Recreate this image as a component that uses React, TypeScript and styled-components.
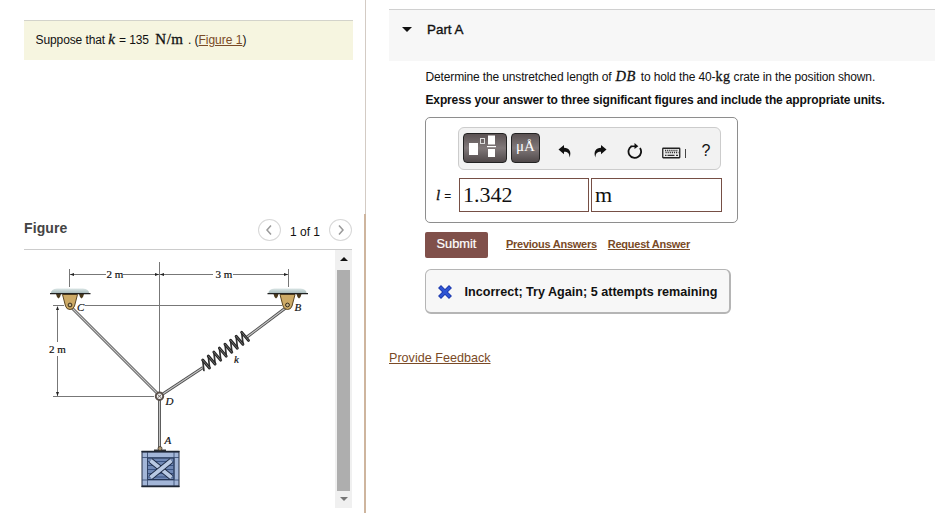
import React from "react";
import styled, { createGlobalStyle } from "styled-components";

const GlobalStyle = createGlobalStyle`
  * {
    box-sizing: border-box;
  }
  body {
    margin: 0;
    background: #fff;
    color: #111;
    font-family: "Liberation Sans", Arial, sans-serif;
    font-size: 12px;
    overflow: hidden;
  }
`;

const Bracket = ({ x }: { x: number }) => (
  <g transform={`translate(${x} 0)`}>
    <path d="M-19 293 Q-19 289 -13 288.5 H13 Q19 289 19 293 Z" fill="url(#ceiling)" />
    <path d="M-14 294 h5 l-1 3 l-1.500 1.500 l-1.500 -1.500 Z M9 294 h5 l-1 3 l-1.500 1.500 l-1.500 -1.500 Z" fill="#4b3a1c" />
    <path d="M-7.500 294.500 H7.500 L4.500 306 Q3.500 309.500 0 309.500 Q-3.500 309.500 -4.500 306 Z" fill="#cdaa66" stroke="#5b4520" strokeWidth="1" />
    <path d="M-20 293.700 H20.500" stroke="#222" strokeWidth="1.300" />
    <circle cx="0" cy="305" r="1.900" fill="#c4b48c" stroke="#332816" strokeWidth="1" />
  </g>
);

const Rope = ({ d }: { d: string }) => (
  <>
    <path d={d} stroke="#4a4a4a" strokeWidth="2.900" fill="none" />
    <path d={d} stroke="#c4c4c4" strokeWidth="1.200" fill="none" />
  </>
);

// front strands of the spring are heavy, the strands behind them are thin
const coilStarts = Array.from({ length: 8 }, (_, i) => [202.7 + i * 5.57, 360 - i * 3.95]);
const frontCoils = coilStarts.map(([x, y]) => `M${x} ${y} l6.8 8`).join(" ");
const backCoils = coilStarts.map(([x, y]) => `M${x} ${y} l1.2 10.5`).join(" ");

const Diagram = () => (
  <DiagramSvg viewBox="24 250 311 258">
    <defs>
      <linearGradient id="ceiling" x1="0" y1="0" x2="0" y2="1">
        <stop offset="0" stopColor="#dbe6e6" />
        <stop offset="1" stopColor="#a9bcbc" />
      </linearGradient>
    </defs>
    <g stroke="#777" strokeWidth="1" fill="none">
      <path d="M69.500 269 V287 M288.500 269 V287 M159.500 262 V393" />
      <path d="M70 274.500 H106 M123 274.500 H213 M233 274.500 H288" />
      <path d="M53 305.500 H64 M85 305.500 H282 M53 396.500 H154" />
      <path d="M57.500 307 V342 M57.500 356 V396" />
    </g>
    <path
      d="M70 274.500 l4 -1.500 v3 Z M159 274.500 l-4 -1.500 v3 Z M160 274.500 l4 -1.500 v3 Z M288 274.500 l-4 -1.500 v3 Z M57.500 306 l-1.500 4 h3 Z M57.500 396 l-1.500 -4 h3 Z"
      fill="#222"
    />
    <Rope d="M71 307 L158 394" />
    <Rope d="M162 394.500 L203 367.500" />
    <Rope d="M247 337 L285.500 308" />
    <Rope d="M159.500 399 V449" />
    <Bracket x={70} />
    <Bracket x={287.5} />
    <path d={backCoils} stroke="#333" strokeWidth="1.700" strokeLinecap="round" />
    <path d={frontCoils} stroke="#242424" strokeWidth="2.900" strokeLinecap="round" />
    <path d={frontCoils} stroke="#8c8c8c" strokeWidth="0.700" strokeLinecap="round" />
    <circle cx="159.500" cy="396.300" r="3.700" fill="#eee" stroke="#5a504a" strokeWidth="2" />
    <path d="M157.500 394.500 l4 3.500 M161.500 394.500 l-4 3.500" stroke="#5a504a" strokeWidth="0.800" />
    <path d="M154 449.500 h12 v2 h-12 Z" fill="#333" />
    <circle cx="160" cy="448.500" r="2" fill="#b29b78" stroke="#40382c" strokeWidth="0.800" />
    <rect x="141.500" y="451" width="38" height="36" fill="#222d42" />
    <rect x="142.500" y="452.500" width="36" height="33" fill="#a3b6d8" />
    <rect x="147.500" y="458" width="26.500" height="21.500" fill="#7088b5" stroke="#1d2a44" strokeWidth="1" />
    <path d="M148 461.500 h26 M148 465.500 h26 M148 469.500 h26 M148 473.500 h26 M148 477 h26" stroke="#344d7c" strokeWidth="0.900" />
    <path d="M150.500 460.500 L171.500 477.500" stroke="#1d2a44" strokeWidth="5.600" />
    <path d="M150.500 460.500 L171.500 477.500" stroke="#b9c9e3" strokeWidth="3.800" />
    <path d="M150.500 477.500 L171.500 460.500" stroke="#1d2a44" strokeWidth="5.600" />
    <path d="M150.500 477.500 L171.500 460.500" stroke="#b9c9e3" strokeWidth="3.800" />
    <path d="M142 457.500 h37 M142 480 h37 M147.500 452 v34 M174 452 v34" stroke="#33476c" strokeWidth="0.800" />
    <path d="M141.500 451.500 h38 M141.500 486.500 h38" stroke="#1e2633" strokeWidth="1.500" />
    <Label x="106.500" y="277.500">2 m</Label>
    <Label x="215.500" y="277.500">3 m</Label>
    <Label x="49" y="353">2 m</Label>
    <Label x="77" y="310.500" $italic>C</Label>
    <Label x="294.500" y="310.500" $italic>B</Label>
    <Label x="234" y="363" $italic>k</Label>
    <Label x="165.500" y="405" $italic>D</Label>
    <Label x="164.500" y="444" $italic>A</Label>
  </DiagramSvg>
);

const App = () => {
  return (
    <Page>
      <GlobalStyle />
      <Left>
        <Prompt>
          Suppose that <Math $size={15} $width={7.5} $italic>k</Math> = 135 &nbsp;
          <Math $size={15} $width={29.5}>N/m</Math> . (<Link href="#">Figure 1</Link>)
        </Prompt>
        <FigureHeader>
          <h2>Figure</h2>
          <Pager>
            <RoundButton aria-label="Previous">
              <svg width="8" height="12" viewBox="0 0 8 12"><path d="M6 1.500 L2 6 L6 10.500" /></svg>
            </RoundButton>
            <span>1 of 1</span>
            <RoundButton aria-label="Next">
              <svg width="8" height="12" viewBox="0 0 8 12"><path d="M2 1.500 L6 6 L2 10.500" /></svg>
            </RoundButton>
          </Pager>
        </FigureHeader>
        <FigureBody>
          <Diagram />
          <Scrollbar>
            <Arrow $color="#111" $up />
            <Thumb />
            <Arrow $color="#777" />
          </Scrollbar>
        </FigureBody>
      </Left>
      <Divider />
      <Right>
        <PartHeader>
          <Arrow $color="#111" $size={5} />
          <span>Part A</span>
        </PartHeader>
        <Question>
          <Line>
            Determine the unstretched length of <Math $size={14.5} $width={22} $gap={1}>
              <i>DB</i>
            </Math> to hold the 40-
            <Math $size={14} $width={15}>kg</Math> crate in the position shown.
          </Line>
          <Line $bold>Express your answer to three significant figures and include the appropriate units.</Line>
          <AnswerBox>
            <Toolbar>
              <DarkButton $width={44} aria-label="Templates">
                <svg width="36" height="26" viewBox="0 0 36 26">
                  <rect x="2" y="8" width="9" height="12" fill="#fff" />
                  <rect x="13.500" y="3.500" width="4" height="5" fill="none" stroke="#ddd" />
                  <rect x="21" y="0.500" width="7" height="9" fill="#fff" />
                  <rect x="20" y="11" width="9" height="1.200" fill="#fff" />
                  <rect x="21" y="14" width="7" height="8" fill="#fff" />
                </svg>
              </DarkButton>
              <DarkButton $width={29} $raise={3}>μÅ</DarkButton>
              <Tools>
                <svg width="14" height="14" viewBox="0 0 14 14">
                  <path d="M0.500 5.500 L6 1 V3.700 C11 3.700 14 7.500 11.500 13.500 C11.500 9 9.500 7.600 6 7.700 V10.300 Z" fill="#111" />
                </svg>
                <svg width="14" height="14" viewBox="0 0 14 14">
                  <path d="M13.500 5.500 L8 1 V3.700 C3 3.700 0 7.500 2.500 13.500 C2.500 9 4.500 7.600 8 7.700 V10.300 Z" fill="#111" />
                </svg>
                <svg width="16" height="16" viewBox="0 0 16 16">
                  <path d="M4.500 3.200 A6.300 6.300 0 1 0 13 5" fill="none" stroke="#111" strokeWidth="1.800" />
                  <path d="M3.700 3.300 H9" stroke="#111" strokeWidth="1.600" />
                  <path d="M7.500 0 L11.300 3.300 L7.500 6 Z" fill="#111" />
                </svg>
                <Keyboard width="25" height="12" viewBox="0 0 25 12">
                  <rect x="0.750" y="1.250" width="17" height="9.500" rx="0.500" fill="#eee" stroke="#222" strokeWidth="1.300" />
                  <path d="M3 3.500 h13 M3.500 5.500 h13" stroke="#333" strokeWidth="1.300" strokeDasharray="1.200 0.900" />
                  <path d="M3 8.300 h1.500 M5.500 8.300 h7 M14 8.300 h2" stroke="#333" strokeWidth="1.200" />
                  <path d="M23.500 2 v9" stroke="#444" />
                </Keyboard>
                <span>?</span>
              </Tools>
            </Toolbar>
            <Inputs>
              <span><Math $size={15} $width={5} $italic>l</Math> =</span>
              <Field $width={130}>1.342</Field>
              <Field $width={131}>m</Field>
            </Inputs>
          </AnswerBox>
          <Actions>
            <Submit>Submit</Submit>
            <Link href="#" $small>Previous Answers</Link>
            <Link href="#" $small>Request Answer</Link>
          </Actions>
          <Feedback>
            <svg width="14" height="14" viewBox="0 0 14 14">
              <path d="M3 3 L11 11 M11 3 L3 11" stroke="#1a35a8" strokeWidth="4.200" strokeLinecap="square" />
              <path d="M3 3 L11 11 M11 3 L3 11" stroke="#2f55d4" strokeWidth="2.600" strokeLinecap="square" />
            </svg>
            Incorrect; Try Again; 5 attempts remaining
          </Feedback>
        </Question>
        <Footer>
          <Link href="#">Provide Feedback</Link>
        </Footer>
      </Right>
    </Page>
  );
};

const Page = styled.div`
  display: flex;
  width: 935px;
  height: 513px;
  overflow: hidden;
`;

const Left = styled.div`
  width: 364px;
  padding: 20px 11px 0 24px;
`;

const Divider = styled.div`
  width: 2px;
  background: linear-gradient(#d3cbc4, #d3cbc4) 1px 0 / 1px 214px no-repeat,
    linear-gradient(#ceb59e, #ceb59e) 0 214px / 2px 299px no-repeat;
`;

const Right = styled.div`
  flex: 1;
  padding: 9px 0 0 23px;
`;

const Math = styled.span<{ $size: number; $width: number; $italic?: boolean; $gap?: number }>`
  display: inline-block;
  width: ${(p) => p.$width}px;
  margin-left: ${(p) => p.$gap || 0}px;
  font-family: "Liberation Serif", "Times New Roman", serif;
  font-size: ${(p) => p.$size}px;
  font-style: ${(p) => (p.$italic ? "italic" : "normal")};
  line-height: 14px;
  letter-spacing: 0.5px;
  -webkit-text-stroke: 0.3px currentColor;
`;

const Link = styled.a<{ $small?: boolean }>`
  color: #7a4a26;
  text-decoration: underline;
  font-size: ${(p) => (p.$small ? "11px" : "inherit")};
  font-weight: ${(p) => (p.$small ? "bold" : "normal")};
  letter-spacing: ${(p) => (p.$small ? "-0.26px" : "normal")};
`;

const Prompt = styled.div`
  width: 329px;
  height: 40px;
  padding-left: 11.5px;
  line-height: 38px;
  white-space: nowrap;
  letter-spacing: -0.1px;
  background: #f6f5e0;
  border-top: 1px solid #d3d3cb;
`;

const FigureHeader = styled.div`
  display: flex;
  justify-content: space-between;
  width: 328px;
  height: 34px;
  margin-top: 156px;
  border-bottom: 1px solid #ccc;
  h2 {
    margin: 4px 0 0;
    font-size: 14px;
    line-height: 16px;
    letter-spacing: 0.1px;
    color: #444;
  }
`;

const Pager = styled.div`
  display: flex;
  gap: 9px;
  height: 24px;
  margin-top: 3px;
  line-height: 26px;
`;

const RoundButton = styled.button`
  display: grid;
  place-items: center;
  width: 23px;
  height: 22px;
  padding: 0;
  background: #fff;
  border: 1px solid #d8d8d8;
  border-radius: 50%;
  path {
    fill: none;
    stroke: #999;
    stroke-width: 1.5;
  }
`;

const FigureBody = styled.div`
  display: flex;
  width: 328px;
  height: 258px;
`;

const DiagramSvg = styled.svg`
  width: 311px;
  height: 258px;
`;

const Label = styled.text<{ $italic?: boolean }>`
  font-family: "Liberation Serif", "Times New Roman", serif;
  font-size: 11px;
  font-style: ${(p) => (p.$italic ? "italic" : "normal")};
  fill: #111;
  stroke: #111;
  stroke-width: 0.2px;
`;

const Scrollbar = styled.div`
  display: flex;
  flex-direction: column;
  align-items: center;
  justify-content: space-between;
  width: 17px;
  padding: 7px 0;
  background: #f0f0f0;
`;

const Thumb = styled.div`
  width: 13px;
  height: 221px;
  margin-top: 3px;
  background: #aeaeae;
`;

const Arrow = styled.i<{ $color: string; $up?: boolean; $size?: number }>`
  width: 0;
  height: 0;
  border: ${(p) => p.$size || 4}px solid transparent;
  border-${(p) => (p.$up ? "bottom" : "top")}-color: ${(p) => p.$color};
  border-${(p) => (p.$up ? "top" : "bottom")}-width: 0;
`;

const PartHeader = styled.div`
  display: flex;
  align-items: center;
  gap: 15.5px;
  height: 52px;
  padding: 0 0 12px 12.5px;
  background: #f7f7f7;
  border-top: 1px solid #d0d0d0;
  font-size: 13.4px;
  -webkit-text-stroke: 0.35px currentColor;
`;

const Question = styled.div`
  padding: 5px 0 0 36px;
`;

const Line = styled.div<{ $bold?: boolean }>`
  height: 23px;
  line-height: 23px;
  padding-left: 0.5px;
  white-space: nowrap;
  font-weight: ${(p) => (p.$bold ? "bold" : "normal")};
  letter-spacing: -0.14px;
`;

const AnswerBox = styled.div`
  width: 313px;
  height: 106px;
  margin-top: 5px;
  padding: 9px 0 0 10px;
  border: 1px solid #8e8e8e;
  border-radius: 5px;
`;

const Toolbar = styled.div`
  display: flex;
  gap: 4px;
  width: 263px;
  height: 43px;
  margin-left: 22px;
  padding: 5px 4px;
  background: #f2f2f2;
  border: 1px solid #ccc;
  border-radius: 6px;
`;

const DarkButton = styled.button<{ $width: number; $raise?: number }>`
  display: grid;
  place-items: center;
  width: ${(p) => p.$width}px;
  height: 30px;
  padding: 0 0 ${(p) => p.$raise || 0}px;
  color: #fff;
  background: linear-gradient(#5b5253, #807879 50%, #50494a);
  border: 1px solid #222;
  border-radius: 4px;
  font: 15px "Liberation Serif", serif;
`;

const Tools = styled.div`
  display: flex;
  flex: 1;
  align-items: center;
  gap: 20.5px;
  margin: 4px 0 0 14px;
  span {
    margin-left: -5.5px;
    font-size: 16px;
  }
`;

const Keyboard = styled.svg`
  margin: 4px 0 0 -2px;
`;

const Inputs = styled.div`
  display: flex;
  align-items: center;
  gap: 2px;
  margin-top: 8px;
  > span {
    width: 21px;
  }
`;

const Field = styled.div<{ $width: number }>`
  width: ${(p) => p.$width}px;
  height: 34px;
  padding-left: 3px;
  line-height: 32px;
  border: 1px solid #764f45;
  font-family: "Liberation Serif", serif;
  font-size: 22px;
`;

const Actions = styled.div`
  display: flex;
  gap: 11px;
  height: 26px;
  margin-top: 9px;
  line-height: 24px;
`;

const Submit = styled.button`
  width: 63px;
  height: 26px;
  margin-right: 7px;
  padding: 0 0 3px;
  color: #fff;
  background: #80504a;
  border: 0;
  border-radius: 2px;
  font: 12.8px "Liberation Sans", sans-serif;
  -webkit-text-stroke: 0.2px currentColor;
`;

const Feedback = styled.div`
  display: flex;
  align-items: center;
  gap: 12.5px;
  width: 306px;
  height: 45px;
  margin-top: 11px;
  padding: 1px 0 0 12px;
  background: #f7f7f7;
  border: 1px solid #b5b5b5;
  border-bottom-width: 2px;
  border-right-width: 2px;
  border-radius: 6px;
  font-size: 12.6px;
  font-weight: bold;
  white-space: nowrap;
`;

const Footer = styled.div`
  margin-top: 37px;
  font-size: 12.6px;
`;

export default App;
